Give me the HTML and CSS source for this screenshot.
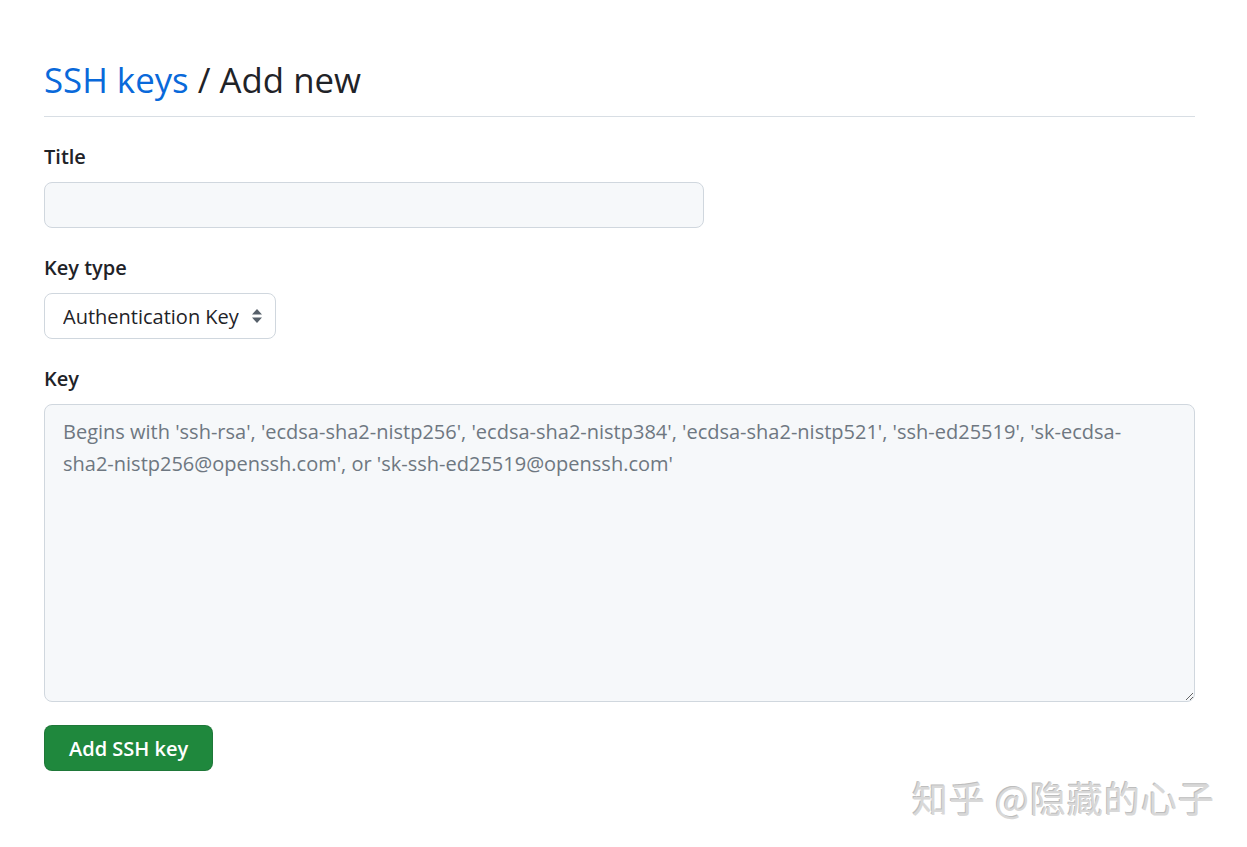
FILE: index.html
```html
<!DOCTYPE HTML>

<HTML>
<HEAD>
	<TITLE>Add new SSH key</TITLE>

	<meta charset="UTF-8">

	<link rel="stylesheet" href="styles.css">

</HEAD>

<BODY>

<div class="page">

	<div class="subhead">
		<h2 class="subhead-heading"><a href="#" class="crumb">SSH keys</a> / Add new</h2>
	</div>

	<form class="new-key" onsubmit="event.preventDefault()">

		<div class="form-group">
			<label class="form-label" for="key-title">Title</label>
			<input type="text" class="form-control title-input" id="key-title">
		</div>

		<div class="form-group">
			<label class="form-label" for="key-type">Key type</label>
			<div class="select-wrap">
				<select class="form-select" id="key-type">
					<option>Authentication Key</option>
					<option>Signing Key</option>
				</select>
				<svg class="select-arrow" width="12" height="16" viewBox="0 0 12 16">
					<path d="M6 1 L11 6.5 H1 Z M6 15 L1 9.5 H11 Z" fill="#57606a"/>
				</svg>
			</div>
		</div>

		<div class="form-group">
			<label class="form-label" for="key-value">Key</label>
			<textarea class="form-control key-input" id="key-value" placeholder="Begins with 'ssh-rsa', 'ecdsa-sha2-nistp256', 'ecdsa-sha2-nistp384', 'ecdsa-sha2-nistp521', 'ssh-ed25519', 'sk-ecdsa-sha2-nistp256@openssh.com', or 'sk-ssh-ed25519@openssh.com'"></textarea>
		</div>

		<button type="submit" class="btn-primary">Add SSH key</button>

	</form>

</div>

<div class="watermark">知乎 @隐藏的心子</div>

</BODY>
</HTML>
```

FILE: styles.css
```css
body {
	margin: 0;
	background: #ffffff;
	font-family: "Open Sans", "Noto Sans", sans-serif;
	color: #1f2328;
}

.page {
	width: 1151px;
	margin-left: 44px;
}

.subhead {
	padding-top: 56px;
	padding-bottom: 12px;
	border-bottom: 1px solid #d8dee4;
}

.subhead-heading {
	margin: 0;
	font-size: 34.8px;
	font-weight: 400;
	line-height: 48px;
}

.crumb {
	color: #0969da;
	text-decoration: none;
}

.new-key {
	padding-top: 26px;
}

.form-group {
	margin-bottom: 26px;
}

.form-label {
	display: block;
	font-size: 20px;
	font-weight: 600;
	line-height: 28px;
	margin-bottom: 11px;
}

.form-control {
	box-sizing: border-box;
	display: block;
	border: 1px solid #d0d7de;
	border-radius: 8px;
	background-color: #f6f8fa;
	font-family: inherit;
	color: #1f2328;
	outline: none;
}

.title-input {
	width: 660px;
	height: 46px;
	padding: 0 18px;
	font-size: 20px;
}

.select-wrap {
	position: relative;
	display: inline-block;
}

.form-select {
	box-sizing: border-box;
	width: 232px;
	height: 46px;
	padding: 0 36px 0 18px;
	border: 1px solid #d0d7de;
	border-radius: 8px;
	background: #ffffff;
	font-family: inherit;
	font-size: 20px;
	color: #1f2328;
	appearance: none;
	-webkit-appearance: none;
	outline: none;
}

.select-arrow {
	position: absolute;
	right: 13px;
	top: 15px;
	pointer-events: none;
}

.key-input {
	width: 1151px;
	height: 298px;
	padding: 11px 40px 11px 18px;
	font-size: 20px;
	line-height: 32px;
	resize: vertical;
	margin-top: 0;
}

.key-input::placeholder {
	color: #6e7781;
	opacity: 1;
}

.form-group:last-of-type {
	margin-bottom: 23px;
}

.btn-primary {
	display: block;
	height: 46px;
	padding: 0 24px;
	border: 1px solid rgba(31, 35, 40, 0.15);
	border-radius: 8px;
	background-color: #1f883d;
	color: #ffffff;
	font-family: inherit;
	font-size: 20px;
	font-weight: 600;
	cursor: pointer;
}

.watermark {
	position: absolute;
	left: 912px;
	top: 774px;
	font-family: "Noto Sans CJK SC", sans-serif;
	font-size: 36px;
	line-height: 46px;
	color: #d8d8d8;
	text-shadow: 1px 1px 0 #ffffff, -1px -1px 0 #bdbdbd;
	letter-spacing: 1px;
}
```
